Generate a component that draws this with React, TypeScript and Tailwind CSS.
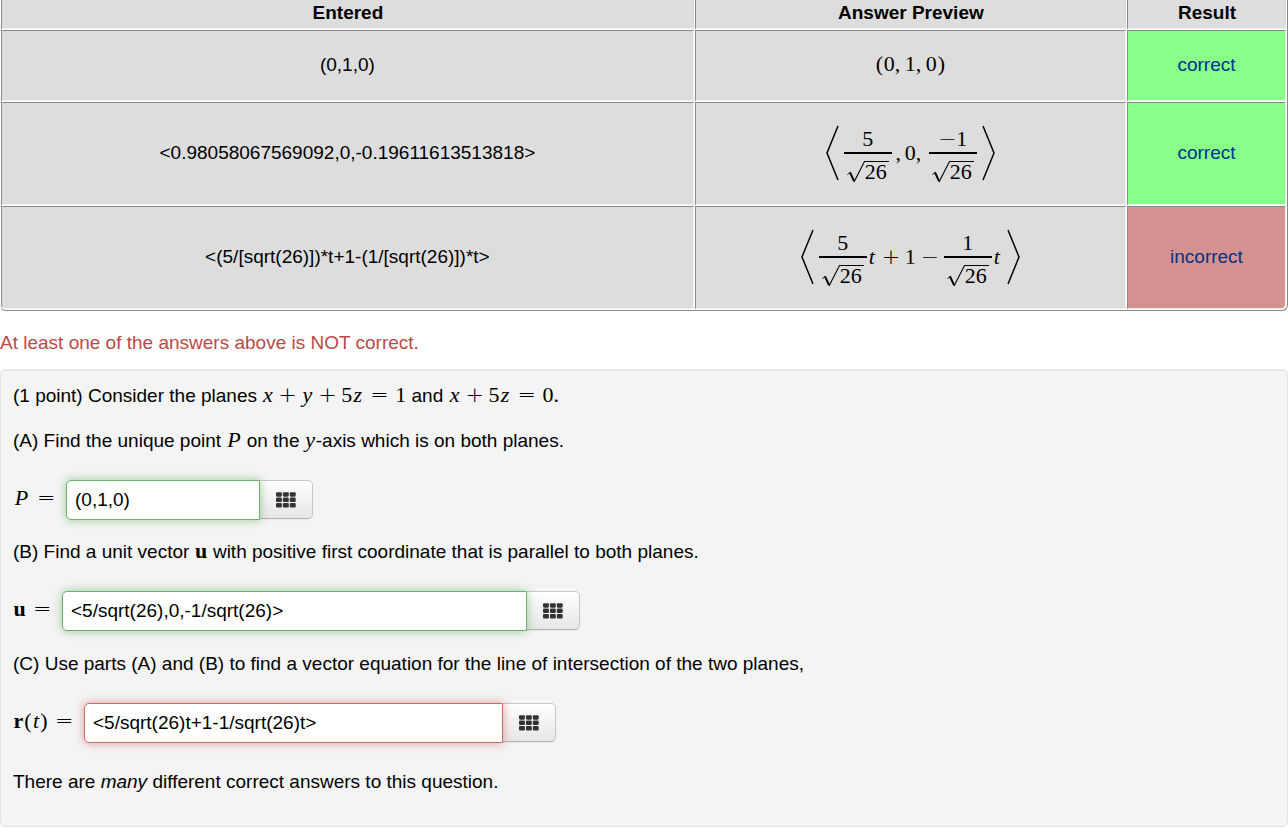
import type { ReactNode } from "react";

function Sym({ children, wide = "w-[11px]", style = "" }: { children: ReactNode; wide?: string; style?: string }) {
  return <span className={`inline-block text-center ${wide} ${style}`}>{children}</span>;
}

const operator = "inline-block w-[18px] text-center font-['DejaVu_Sans',sans-serif] font-extralight leading-[22px]";

function Plus({ children = "+" }: { children?: ReactNode }) {
  return <span className={`mx-[5px] ${operator}`}>{children}</span>;
}

function Equals() {
  return <span className={`mx-[7px] ${operator}`}>=</span>;
}

function MathText({ children }: { children: ReactNode }) {
  return (
    <span className="inline-block whitespace-nowrap font-['Liberation_Serif',serif] text-[22px] leading-[22px]">
      {children}
    </span>
  );
}

function Root({ children }: { children: ReactNode }) {
  return (
    <span className="flex">
      <svg className="h-[24px] w-[18px]" viewBox="0 0 18 24" fill="none" stroke="black">
        <path d="M0.5 14.5 L3.4 12.3" strokeWidth="1" />
        <path d="M3 12.3 L7 21" strokeWidth="2" />
        <path d="M7 22 L17.5 1.5 H18" strokeWidth="1.1" />
      </svg>
      <span className="mt-px h-[22px] border-t border-black pr-[2px] leading-[20px]">{children}</span>
    </span>
  );
}

function Fraction({ top, children }: { top: ReactNode; children: ReactNode }) {
  return (
    <span className="flex w-[48px] flex-col items-center pt-1">
      <span className="flex h-[26px] items-center leading-[22px]">{top}</span>
      <span className="h-[2px] w-full bg-black" />
      <span className="mt-[6px] flex h-[24px]">{children}</span>
    </span>
  );
}

function Angle({ right = false }: { right?: boolean }) {
  return (
    <svg className="h-[56px] w-[13px] shrink-0" viewBox="0 0 13 56" fill="none" stroke="black" strokeWidth="1.5">
      <path d={right ? "M1 1 L12 28 L1 55" : "M12 1 L1 28 L12 55"} />
    </svg>
  );
}

function Vector({ children }: { children: ReactNode }) {
  return (
    <span className="flex items-center justify-center font-['Liberation_Serif',serif] text-[22px] leading-[22px]">
      <Angle />
      <span className="mx-[5px] flex items-center">{children}</span>
      <Angle right />
    </span>
  );
}

const cell =
  "border border-t-[#888] border-l-[#888] border-r-[#eee] border-b-[#eee] p-0 pb-[2px] text-center align-middle";

const heading = "border-b border-l border-b-[#eee] border-l-[#888] p-0 pb-[2px]";

function Row({ entered, preview, ok, tall, last }: { entered: string; preview: ReactNode; ok: boolean; tall?: boolean; last?: boolean }) {
  return (
    <tr className={tall ? "h-[103px]" : "h-[71px]"}>
      <td className={`${cell} bg-[#ddd] ${last ? "rounded-bl-[5px]" : ""}`}>{entered}</td>
      <td className={`${cell} bg-[#ddd]`}>{preview}</td>
      <td className={`${cell} ${ok ? "bg-[#8f8]" : "bg-[#d69191]"} ${last ? "rounded-br-[5px]" : ""}`}>
        <a href="#answers" className="text-[#038]">{ok ? "correct" : "incorrect"}</a>
      </td>
    </tr>
  );
}

function GridIcon() {
  const steps = [0, 1, 2];
  return (
    <svg className="h-[16px] w-[20px]" viewBox="0 0 20 16" fill="#333">
      {steps.map((r) =>
        steps.map((c) => <rect key={`${r}${c}`} x={c * 6.9} y={r * 5.4 + 0.2} width="5.9" height="4.5" rx="1.1" />)
      )}
    </svg>
  );
}

function Answer({ id, label, value, width, wrong }: { id: string; label: ReactNode; value: string; width: string; wrong?: boolean }) {
  return (
    <div className="flex h-[40px] items-start">
      <label htmlFor={id} className="mt-[5px] mr-1 shrink-0">
        <MathText>{label}</MathText>
      </label>
      <input
        id={id}
        type="text"
        defaultValue={value}
        className={`relative h-[40px] min-w-0 rounded-l-[5px] border bg-white px-2 outline-none ${width} ${
          wrong
            ? "border-[#d06868] shadow-[0_0_10px_rgba(208,90,90,0.6)]"
            : "border-[#6fae6f] shadow-[0_0_10px_rgba(90,170,90,0.6)]"
        }`}
      />
      <button
        type="button"
        aria-label="Open equation editor"
        className="flex h-[39px] w-[53px] shrink-0 items-center justify-center rounded-r-[5px] border border-l-0 border-[#c8c8c8] border-b-[#b3b3b3] bg-linear-to-b from-white to-[#e6e6e6] shadow-[0_1px_2px_rgba(0,0,0,0.05)]"
      >
        <GridIcon />
      </button>
    </div>
  );
}

export default function App() {
  return (
    <main className="overflow-x-hidden bg-white font-['Liberation_Sans',Arial,sans-serif] text-[19px] leading-[28px] text-black">
      <table className="-mt-px w-full table-fixed border-separate border-spacing-px rounded-b-[6px] border-r border-b border-[#888]">
        <colgroup>
          <col className="w-[54%]" />
          <col />
          <col className="w-[12.4%]" />
        </colgroup>
        <thead>
          <tr className="h-[29px] bg-[#ddd] leading-[24px]">
            <th className={heading}>Entered</th>
            <th className={heading}>Answer Preview</th>
            <th className={heading}>Result</th>
          </tr>
        </thead>
        <tbody>
          <Row
            entered="(0,1,0)"
            ok
            preview={
              <MathText>
                <Sym wide="w-[9px]">(</Sym>0<Sym wide="w-[10px]" style="text-left">,</Sym>1
                <Sym wide="w-[10px]" style="text-left">,</Sym>0<Sym wide="w-[9px]">)</Sym>
              </MathText>
            }
          />
          <Row
            entered="<0.98058067569092,0,-0.19611613513818>"
            ok
            tall
            preview={
              <Vector>
                <Fraction top="5"><Root>26</Root></Fraction>
                <Sym wide="w-[13px]">,</Sym>0<Sym wide="w-[13px]" style="text-left">,</Sym>
                <Fraction top={<><span className={operator}>−</span>1</>}><Root>26</Root></Fraction>
              </Vector>
            }
          />
          <Row
            entered="<(5/[sqrt(26)])*t+1-(1/[sqrt(26)])*t>"
            ok={false}
            tall
            last
            preview={
              <Vector>
                <Fraction top="5"><Root>26</Root></Fraction>
                <Sym wide="w-[10px]" style="italic">t</Sym>
                <Plus />1<Plus>−</Plus>
                <Fraction top="1"><Root>26</Root></Fraction>
                <Sym wide="w-[10px]" style="italic">t</Sym>
              </Vector>
            }
          />
        </tbody>
      </table>

      <p className="mt-[18px] text-[#b94a48]">At least one of the answers above is NOT correct.</p>

      <section className="mt-[12px] rounded-[5px] border border-[#e3e3e3] bg-[#f4f4f4] px-3 pt-[12px] pb-[30px] shadow-[inset_0_1px_1px_rgba(0,0,0,0.05)]">
        <p className="h-[28px]">
          (1 point) Consider the planes{" "}
          <MathText>
            <Sym style="italic">x</Sym>
            <Plus />
            <Sym wide="w-[12px]" style="italic">y</Sym>
            <Plus />5<Sym style="italic">z</Sym>
            <Equals />1
          </MathText>{" "}
          and{" "}
          <MathText>
            <Sym wide="w-[12px]" style="italic">x</Sym>
            <Plus />5<Sym style="italic">z</Sym>
            <Equals />0.
          </MathText>
        </p>
        <p className="mt-[17px] h-[28px]">
          (A) Find the unique point{" "}
          <MathText><Sym wide="w-[15px]" style="italic">P</Sym></MathText> on the{" "}
          <MathText><Sym style="italic">y</Sym></MathText>-axis which is on both planes.
        </p>
        <div className="mt-[25px]">
          <Answer
            id="point"
            value="(0,1,0)"
            width="w-[194px]"
            label={<><Sym wide="w-[17px]" style="italic">P</Sym><Equals /></>}
          />
        </div>
        <p className="mt-[18px] h-[28px]">
          (B) Find a unit vector{" "}
          <MathText><Sym wide="w-[13px]" style="font-bold">u</Sym></MathText> with positive first coordinate that is
          parallel to both planes.
        </p>
        <div className="mt-[25px]">
          <Answer
            id="direction"
            value="<5/sqrt(26),0,-1/sqrt(26)>"
            width="w-[465px]"
            label={<><Sym wide="w-[13px]" style="font-bold">u</Sym><Equals /></>}
          />
        </div>
        <p className="mt-[19px] h-[28px]">
          (C) Use parts (A) and (B) to find a vector equation for the line of intersection of the two planes,
        </p>
        <div className="mt-[25px]">
          <Answer
            id="line"
            value="<5/sqrt(26)t+1-1/sqrt(26)t>"
            width="w-[419px]"
            wrong
            label={
              <>
                <Sym style="font-bold">r</Sym>
                <Sym wide="w-[8px]">(</Sym>
                <Sym wide="w-[8px]" style="italic">t</Sym>
                <Sym wide="w-[8px]">)</Sym>
                <Equals />
              </>
            }
          />
        </div>
        <p className="mt-[25px]">
          There are <em>many</em> different correct answers to this question.
        </p>
      </section>
    </main>
  );
}
